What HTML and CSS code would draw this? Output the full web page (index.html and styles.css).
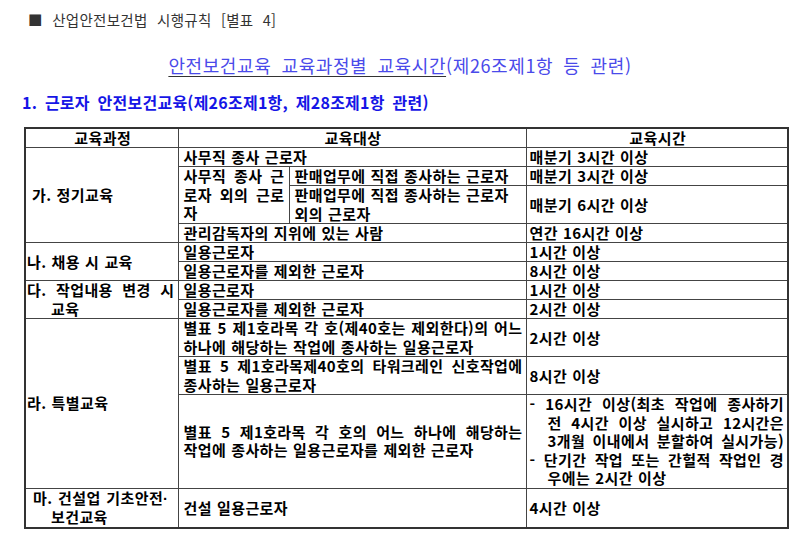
FILE: index.html
```html
<!DOCTYPE html>
<html lang="ko">
<head>
<meta charset="utf-8">
<title>산업안전보건법 시행규칙 별표 4</title>
<link rel="stylesheet" href="styles.css">
</head>
<body>
<div class="law"><span class="sq">■</span> 산업안전보건법 시행규칙 [별표 4]</div>
<div class="title"><u>안전보건교육 교육과정별 교육시간</u>(제26조제1항 등 관련)</div>
<div class="heading">1. 근로자 안전보건교육(제26조제1항, 제28조제1항 관련)</div>
<table class="edu">
  <colgroup>
    <col class="c1"><col class="c2a"><col class="c2b"><col class="c3">
  </colgroup>
  <tr class="hd">
    <th>교육과정</th><th colspan="2">교육대상</th><th>교육시간</th>
  </tr>
  <tr>
    <td rowspan="4" class="k pl6">가. 정기교육</td>
    <td colspan="2">사무직 종사 근로자</td>
    <td class="t">매분기 3시간 이상</td>
  </tr>
  <tr class="thick">
    <td rowspan="2" class="ml sub"><div class="jl">사무직 종사 근</div><div class="jl">로자 외의 근로</div><div>자</div></td>
    <td>판매업무에 직접 종사하는 근로자</td>
    <td class="t">매분기 3시간 이상</td>
  </tr>
  <tr>
    <td class="ml"><div>판매업무에 직접 종사하는 근로자</div><div>외의 근로자</div></td>
    <td class="t">매분기 6시간 이상</td>
  </tr>
  <tr>
    <td colspan="2">관리감독자의 지위에 있는 사람</td>
    <td class="t">연간 16시간 이상</td>
  </tr>
  <tr>
    <td rowspan="2" class="k">나. 채용 시 교육</td>
    <td colspan="2">일용근로자</td>
    <td class="t">1시간 이상</td>
  </tr>
  <tr>
    <td colspan="2">일용근로자를 제외한 근로자</td>
    <td class="t">8시간 이상</td>
  </tr>
  <tr>
    <td rowspan="2" class="k ml"><div class="jl">다. 작업내용 변경 시</div><div class="ind">교육</div></td>
    <td colspan="2">일용근로자</td>
    <td class="t">1시간 이상</td>
  </tr>
  <tr>
    <td colspan="2">일용근로자를 제외한 근로자</td>
    <td class="t">2시간 이상</td>
  </tr>
  <tr>
    <td rowspan="3" class="k">라. 특별교육</td>
    <td colspan="2" class="ml"><div class="jl">별표 5 제1호라목 각 호(제40호는 제외한다)의 어느</div><div>하나에 해당하는 작업에 종사하는 일용근로자</div></td>
    <td class="t">2시간 이상</td>
  </tr>
  <tr>
    <td colspan="2" class="ml"><div class="jl">별표 5 제1호라목제40호의 타워크레인 신호작업에</div><div>종사하는 일용근로자</div></td>
    <td class="t">8시간 이상</td>
  </tr>
  <tr>
    <td colspan="2" class="ml"><div class="jl">별표 5 제1호라목 각 호의 어느 하나에 해당하는</div><div>작업에 종사하는 일용근로자를 제외한 근로자</div></td>
    <td class="t ml">
      <div class="jl">- 16시간 이상(최초 작업에 종사하기</div>
      <div class="jl ind2">전 4시간 이상 실시하고 12시간은</div>
      <div class="jl ind2">3개월 이내에서 분할하여 실시가능)</div>
      <div class="jl">- 단기간 작업 또는 간헐적 작업인 경</div>
      <div class="ind2">우에는 2시간 이상</div>
    </td>
  </tr>
  <tr>
    <td class="k ml"><div class="jl l1">마. 건설업 기초안전<span class="dot">·</span></div><div class="ind">보건교육</div></td>
    <td colspan="2">건설 일용근로자</td>
    <td class="t">4시간 이상</td>
  </tr>
</table>
</body>
</html>
```
FILE: styles.css
```css
body {
  margin: 0;
  background: #fff;
  color: #000;
  font-family: "Noto Sans CJK KR", "Noto Sans", sans-serif;
}

.law {
  margin: 11px 0 0 28px;
  font-size: 14.5px;
  line-height: 18px;
  color: #333;
  letter-spacing: 0.3px;
  word-spacing: 5px;
}

.title {
  margin-top: 25px;
  text-align: center;
  font-size: 18px;
  line-height: 22px;
  color: #4a4aea;
  letter-spacing: 0.6px;
  word-spacing: 4.5px;
}

.title u {
  text-decoration-color: #333;
  text-underline-offset: 3px;
}

.heading {
  margin: 15px 0 0 22px;
  font-size: 16px;
  line-height: 22px;
  font-weight: 700;
  color: #1515e6;
  letter-spacing: 0.25px;
  word-spacing: 3px;
}

.edu {
  margin: 14px 0 0 24px;
  width: 763px;
  border-collapse: collapse;
  table-layout: fixed;
  border: 2px solid #333;
  font-size: 15px;
  font-weight: 700;
  letter-spacing: 0.4px;
  word-spacing: 0.5px;
  line-height: 18px;
}

.c1 { width: 153px; }
.c2a { width: 111px; }
.c2b { width: 237px; }
.c3 { width: 262px; }

.edu th,
.edu td {
  border: 1px solid #444;
  padding: 0 3px 0 5px;
  vertical-align: middle;
  text-align: left;
}

.edu th {
  text-align: center;
  font-weight: 700;
}

.edu td.k {
  padding: 0 3px 0 1px;
}

.edu td.pl6 {
  padding-left: 6px;
}

.edu td.t {
  padding: 0 3px 0 3px;
}

.edu td.sub {
  padding-right: 4px;
}

.edu tr.thick > td {
  border-top: 1px solid #000;
}

.ml { line-height: 18.5px; }

.jl {
  text-align: justify;
  text-align-last: justify;
}

.ind { padding-left: 24px; }
.ind2 { padding-left: 18px; }

.l1 {
  padding: 0 6px 0 6px;
}

.dot {
  font-family: "Liberation Sans", sans-serif;
}
```
